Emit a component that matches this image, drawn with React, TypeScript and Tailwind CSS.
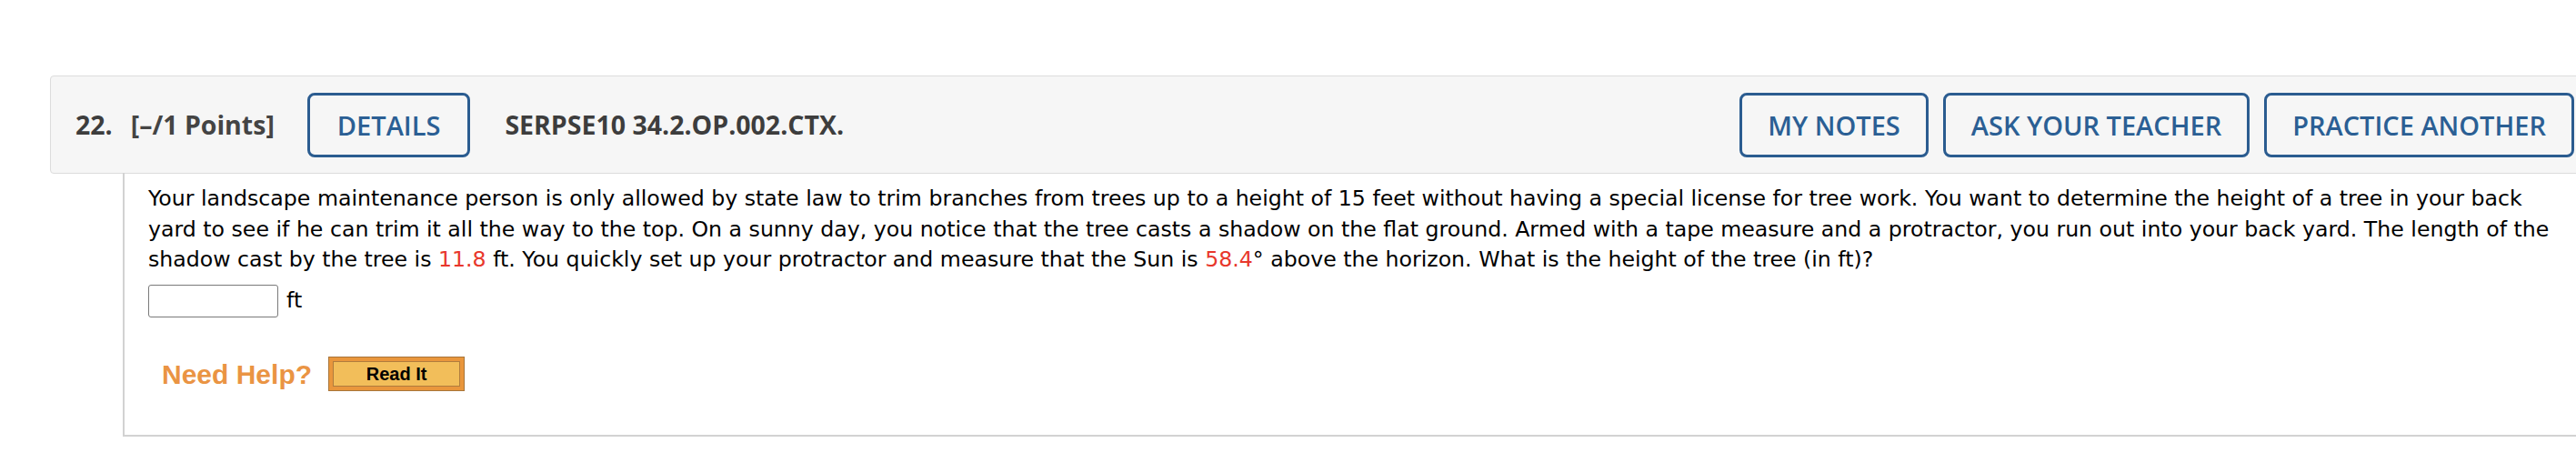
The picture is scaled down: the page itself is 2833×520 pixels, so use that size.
const headerBtn =
  'h-[71px] px-[28px] rounded-[8px] border-[3px] border-[#2b5c90] text-[#2b5f94] text-[29px] font-semibold leading-none'

export default function App() {
  return (
    <div className="w-[2833px] h-[520px] overflow-hidden bg-white pt-[83px] pl-[55px]">
      <div className="w-[2820px]">
        <div
          className="h-[108px] flex items-center justify-between pl-[27px] pr-[43px] rounded-[4px] border border-[#dcdcdc] bg-[#f6f6f6] text-[#3d3d3d]"
          style={{ fontFamily: '"Open Sans", sans-serif' }}
        >
          <div className="flex items-center">
            <span className="text-[28.5px] font-bold">22.</span>
            <span className="ml-[20px] text-[28.5px] font-bold text-[#444]">[–/1 Points]</span>
            <button className={headerBtn + ' ml-[36px] px-[30px]'}>DETAILS</button>
            <span className="ml-[38px] text-[28.5px] font-bold">SERPSE10 34.2.OP.002.CTX.</span>
          </div>
          <div className="flex items-center gap-[16px]">
            <button className={headerBtn}>MY NOTES</button>
            <button className={headerBtn}>ASK YOUR TEACHER</button>
            <button className={headerBtn}>PRACTICE ANOTHER</button>
          </div>
        </div>

        <div className="ml-[80px] -mt-px h-[290px] border-l-2 border-b-2 border-[#d2d2d2] pl-[26px] pt-[12px]">
          <p
            className="w-[2648px] text-[23.65px] leading-[33.5px] text-black"
            style={{ fontFamily: '"DejaVu Sans", Verdana, sans-serif' }}
          >
            Your landscape maintenance person is only allowed by state law to trim branches from trees up to a
            height of 15 feet without having a special license for tree work. You want to determine the height of a
            tree in your back yard to see if he can trim it all the way to the top. On a sunny day, you notice that the
            tree casts a shadow on the flat ground. Armed with a tape measure and a protractor, you run out into your
            back yard. The length of the shadow cast by the tree is <span className="text-[#e8372b]">11.8</span> ft.
            You quickly set up your protractor and measure that the Sun is{' '}
            <span className="text-[#e8372b]">58.4</span>° above the horizon. What is the height of the tree (in ft)?
          </p>

          <div
            className="mt-[10px] flex items-center"
            style={{ fontFamily: '"DejaVu Sans", Verdana, sans-serif' }}
          >
            <input
              type="text"
              className="w-[143px] h-[36px] rounded-[3px] border border-[#7a7a7a] bg-white"
            />
            <span className="ml-[9px] text-[23.65px] text-black">ft</span>
          </div>

          <div
            className="mt-[40px] ml-[15px] flex items-center"
            style={{ fontFamily: '"Liberation Sans", Arial, sans-serif' }}
          >
            <span className="text-[30px] font-bold text-[#e8892f] opacity-90">Need Help?</span>
            <button className="ml-[18px] w-[150px] h-[38px] p-[4px] border border-[#a8753a] bg-[#e9963c]">
              <span className="flex h-full items-center justify-center border border-[#b07c3e] bg-[#f2be5a] text-[20px] font-bold text-black">
                Read It
              </span>
            </button>
          </div>
        </div>
      </div>
    </div>
  )
}
